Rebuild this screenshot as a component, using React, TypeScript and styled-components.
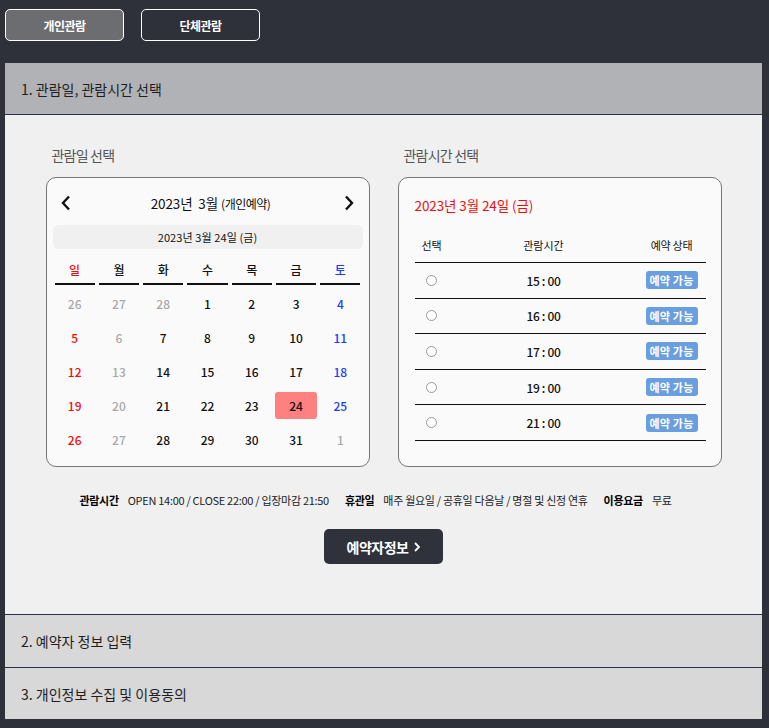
import React from "react";
import styled, { createGlobalStyle } from "styled-components";

const Global = createGlobalStyle`
  html, body { margin: 0; padding: 0; background: #2e313a; }
  body { font-family: "Noto Sans CJK KR", "Noto Sans", sans-serif; }
  * { box-sizing: border-box; }
`;

const Page = styled.div`
  padding: 9px 7px 9px 5px;
  background: #2e313a;
`;

const TopBar = styled.div`
  display: flex;
  gap: 17px;
  margin-bottom: 22px;
`;

const TypeButton = styled.button<{ $active?: boolean }>`
  width: 119px;
  height: 32px;
  border: 1px solid #ffffff;
  border-radius: 5px;
  background: ${(p) => (p.$active ? "#6c6d71" : "transparent")};
  color: #fff;
  font-family: inherit;
  font-size: 12px;
  font-weight: 700;
  letter-spacing: -0.5px;
  cursor: pointer;
`;

const Panel = styled.div`
  display: flex;
  flex-direction: column;
`;

const SectionHeader = styled.div<{ $first?: boolean }>`
  height: 53px;
  display: flex;
  align-items: center;
  padding-left: 16px;
  background: ${(p) => (p.$first ? "#b1b2b5" : "#d8d8d8")};
  border-top: ${(p) => (p.$first ? "none" : "1px solid #283250")};
  border-bottom: ${(p) => (p.$first ? "1px solid #283250" : "none")};
  font-size: 14px;
  font-weight: 400;
  color: #1e1e1e;
  letter-spacing: 0;
  &:first-child,
  &:last-child {
    height: 52px;
  }
`;

const Content = styled.div`
  background: #f0f0f0;
  padding: 30px 0 50px;
  display: flex;
  flex-direction: column;
  align-items: center;
`;

const Columns = styled.div`
  display: grid;
  grid-template-columns: 324px 324px;
  gap: 28px;
`;

const Column = styled.div`
  display: flex;
  flex-direction: column;
`;

const ColTitle = styled.div`
  padding-left: 6px;
  height: 20px;
  line-height: 20px;
  margin-bottom: 12px;
  font-size: 14px;
  color: #555;
  letter-spacing: -0.8px;
`;

const Box = styled.div`
  height: 290px;
  border: 1px solid #777;
  border-radius: 10px;
  background: #fafafa;
`;

const CalBox = styled(Box)`
  padding: 7px 6px 0;
`;

const NavRow = styled.div`
  height: 36px;
  display: flex;
  align-items: center;
  justify-content: space-between;
  padding: 0 8px;
  margin-bottom: 4px;
`;

const NavTitle = styled.div`
  font-size: 13.5px;
  color: #111;
  letter-spacing: -0.1px;
  margin-left: 6px;
  small {
    font-size: 12px;
    margin-left: 3px;
    letter-spacing: -0.5px;
  }
`;

const Chevron = styled.svg`
  width: 10px;
  height: 16px;
  display: block;
`;

const DateBar = styled.div`
  height: 24px;
  border-radius: 6px;
  background: #f0f0f0;
  display: flex;
  align-items: center;
  justify-content: center;
  font-size: 11px;
  color: #111;
  letter-spacing: 0.1px;
`;

const CalGrid = styled.div`
  display: grid;
  grid-template-columns: repeat(7, 1fr);
  margin-top: 7px;
`;

const tone = (t: string) =>
  t === "sun" ? "#f20d0d" : t === "sat" ? "#1d3cf5" : t === "gray" ? "#a8a8a8" : "#111";

const WeekCell = styled.div<{ $tone: string }>`
  margin: 0 2px 1px;
  padding: 6px 0 5px;
  line-height: 16px;
  text-align: center;
  border-bottom: 2px solid #111;
  font-size: 12px;
  font-weight: 500;
  color: ${(p) => tone(p.$tone)};
`;

const DayCell = styled.div<{ $tone: string; $selected?: boolean }>`
  height: 27px;
  margin: 3.5px 1px;
  border-radius: 3px;
  display: flex;
  align-items: center;
  justify-content: center;
  font-size: 12px;
  font-weight: 500;
  background: ${(p) => (p.$selected ? "#ff8080" : "transparent")};
  color: ${(p) => tone(p.$tone)};
`;

const TimeBox = styled(Box)`
  padding: 17px 15px 0 16px;
`;

const RedDate = styled.div`
  height: 20px;
  line-height: 20px;
  font-size: 13.5px;
  color: #f20d0d;
  letter-spacing: -0.1px;
  margin-bottom: 12px;
`;

const TRow = styled.div<{ $head?: boolean }>`
  display: grid;
  grid-template-columns: 34px 190px 1fr;
  align-items: center;
  height: ${(p) => (p.$head ? "36px" : "35.6px")};
  border-bottom: 1px solid #111;
  font-size: ${(p) => (p.$head ? "11px" : "12px")};
  color: #111;
`;

const CellCenter = styled.div`
  display: flex;
  justify-content: center;
`;

const CellStatus = styled.div`
  display: flex;
  justify-content: flex-end;
  padding-right: 8px;
`;

const StatusHead = styled.div`
  width: 52px;
  text-align: center;
  letter-spacing: -0.3px;
`;

const Radio = styled.span`
  width: 11px;
  height: 11px;
  border-radius: 50%;
  border: 1px solid #999;
  background: #fff;
  display: block;
`;

const TimeText = styled.span`
  font-weight: 500;
  letter-spacing: -0.3px;
`;

const Badge = styled.span`
  width: 52px;
  height: 18px;
  border-radius: 3px;
  background: #699ee0;
  color: #fff;
  font-size: 11px;
  font-weight: 700;
  display: flex;
  align-items: center;
  justify-content: center;
  letter-spacing: 0.2px;
`;

const InfoLine = styled.div`
  margin-top: 24px;
  height: 18px;
  display: flex;
  align-items: center;
  gap: 16px;
  font-size: 11px;
  color: #222;
  letter-spacing: -0.3px;
  margin-right: 16px;
`;

const InfoItem = styled.div`
  display: flex;
  gap: 9px;
  b {
    font-weight: 700;
    color: #000;
  }
`;

const NextButton = styled.button`
  margin-top: 20px;
  width: 119px;
  height: 35px;
  border: none;
  border-radius: 5px;
  background: #30323b;
  color: #fff;
  font-family: inherit;
  font-size: 14px;
  font-weight: 700;
  display: flex;
  align-items: center;
  justify-content: center;
  gap: 6px;
  letter-spacing: -0.5px;
`;

const SmallChevron = styled.svg`
  width: 6px;
  height: 10px;
  display: block;
`;

const weekDays = [
  { l: "일", t: "sun" },
  { l: "월", t: "norm" },
  { l: "화", t: "norm" },
  { l: "수", t: "norm" },
  { l: "목", t: "norm" },
  { l: "금", t: "norm" },
  { l: "토", t: "sat" },
];

type Day = { d: number; t: string; sel?: boolean };

const buildDays = (): Day[] => {
  const out: Day[] = [];
  [26, 27, 28].forEach((d) => out.push({ d, t: "gray" }));
  for (let d = 1; d <= 31; d++) {
    const col = (d + 2) % 7;
    let t = "norm";
    if (col === 0) t = "sun";
    else if (col === 1) t = "gray";
    else if (col === 6) t = "sat";
    out.push({ d, t, sel: d === 24 });
  }
  out.push({ d: 1, t: "gray" });
  return out;
};

const times = ["15 : 00", "16 : 00", "17 : 00", "19 : 00", "21 : 00"];

export default function App() {
  const days = buildDays();
  return (
    <Page>
      <Global />
      <TopBar>
        <TypeButton $active>개인관람</TypeButton>
        <TypeButton>단체관람</TypeButton>
      </TopBar>
      <Panel>
        <SectionHeader $first>1. 관람일, 관람시간 선택</SectionHeader>
        <Content>
          <Columns>
            <Column>
              <ColTitle>관람일 선택</ColTitle>
              <CalBox>
                <NavRow>
                  <Chevron viewBox="0 0 10 16">
                    <path d="M8 1.5 L2 8 L8 14.5" fill="none" stroke="#111" strokeWidth="2.4" />
                  </Chevron>
                  <NavTitle>
                    2023년&nbsp; 3월<small>(개인예약)</small>
                  </NavTitle>
                  <Chevron viewBox="0 0 10 16">
                    <path d="M2 1.5 L8 8 L2 14.5" fill="none" stroke="#111" strokeWidth="2.4" />
                  </Chevron>
                </NavRow>
                <DateBar>2023년 3월 24일 (금)</DateBar>
                <CalGrid>
                  {weekDays.map((w) => (
                    <WeekCell key={w.l} $tone={w.t}>
                      {w.l}
                    </WeekCell>
                  ))}
                  {days.map((d, i) => (
                    <DayCell key={i} $tone={d.t} $selected={d.sel}>
                      {d.d}
                    </DayCell>
                  ))}
                </CalGrid>
              </CalBox>
            </Column>
            <Column>
              <ColTitle>관람시간 선택</ColTitle>
              <TimeBox>
                <RedDate>2023년 3월 24일 (금)</RedDate>
                <TRow $head>
                  <CellCenter>선택</CellCenter>
                  <CellCenter>관람시간</CellCenter>
                  <CellStatus>
                    <StatusHead>예약 상태</StatusHead>
                  </CellStatus>
                </TRow>
                {times.map((t) => (
                  <TRow key={t}>
                    <CellCenter>
                      <Radio />
                    </CellCenter>
                    <CellCenter>
                      <TimeText>{t}</TimeText>
                    </CellCenter>
                    <CellStatus>
                      <Badge>예약 가능</Badge>
                    </CellStatus>
                  </TRow>
                ))}
              </TimeBox>
            </Column>
          </Columns>
          <InfoLine>
            <InfoItem>
              <b>관람시간</b>
              <span>OPEN 14:00 / CLOSE 22:00 / 입장마감 21:50</span>
            </InfoItem>
            <InfoItem>
              <b>휴관일</b>
              <span>매주 월요일 / 공휴일 다음날 / 명절 및 신정 연휴</span>
            </InfoItem>
            <InfoItem>
              <b>이용요금</b>
              <span>무료</span>
            </InfoItem>
          </InfoLine>
          <NextButton>
            예약자정보
            <SmallChevron viewBox="0 0 6 10">
              <path d="M1 1 L5 5 L1 9" fill="none" stroke="#fff" strokeWidth="1.8" />
            </SmallChevron>
          </NextButton>
        </Content>
        <SectionHeader>2. 예약자 정보 입력</SectionHeader>
        <SectionHeader>3. 개인정보 수집 및 이용동의</SectionHeader>
      </Panel>
    </Page>
  );
}
